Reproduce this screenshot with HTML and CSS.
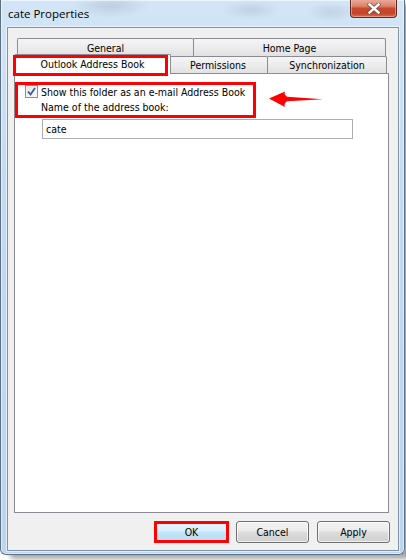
FILE: index.html
```html
<!DOCTYPE html>
<html lang="en">
<head>
<meta charset="utf-8">
<title>cate Properties</title>
<link rel="stylesheet" href="styles.css">
</head>
<body>
<div class="window">
  <div class="titlebar">
    <span class="title">cate Properties</span>
    <button class="close-btn" aria-label="Close">
      <svg width="14" height="11" viewBox="0 0 14 11">
        <path d="M2.5 1.5 L11.5 9.5 M11.5 1.5 L2.5 9.5" stroke="#5b4a48" stroke-width="4.2" stroke-linecap="square" fill="none" opacity="0.75"/>
        <path d="M2.5 1.5 L11.5 9.5 M11.5 1.5 L2.5 9.5" stroke="#ffffff" stroke-width="2.4" stroke-linecap="square" fill="none"/>
      </svg>
    </button>
  </div>
  <div class="client">
    <div class="tabs">
      <div class="tab-row back">
        <div class="tab tab-general">General</div>
        <div class="tab tab-home">Home Page</div>
      </div>
      <div class="tab-row front">
        <div class="tab tab-oab selected marked">Outlook Address Book</div>
        <div class="tab tab-perm">Permissions</div>
        <div class="tab tab-sync">Synchronization</div>
      </div>
    </div>
    <div class="panel">
      <div class="highlight-box">
        <label class="check-row">
          <span class="checkbox">
            <svg width="9" height="9" viewBox="0 0 9 9">
              <path d="M1 4.5 L3.5 7.5 L8 1" stroke="#3d5a98" stroke-width="1.8" fill="none"/>
            </svg>
          </span>
          <span>Show this folder as an e-mail Address Book</span>
        </label>
        <div class="field-label">Name of the address book:</div>
      </div>
      <div class="text-field">cate</div>
      <svg class="arrow" width="56" height="18" viewBox="0 0 56 18">
        <path d="M1 8.5 L17 1.5 Q15.5 4.5 19 6.8 L55 9.3 L19 11.2 Q15.5 13.5 17 17 Z" fill="#ff0000"/>
      </svg>
    </div>
    <div class="buttons">
      <button class="btn default marked">OK</button>
      <button class="btn">Cancel</button>
      <button class="btn">Apply</button>
    </div>
  </div>
</div>
</body>
</html>
```

FILE: styles.css
```css
* {
  box-sizing: border-box;
}

html,
body {
  margin: 0;
  padding: 0;
  background: #ffffff;
}

body {
  width: 406px;
  height: 560px;
  overflow: hidden;
  font-family: "DejaVu Sans Condensed", "Liberation Sans", sans-serif;
  font-size: 10.5px;
  color: #000000;
}

/* Aero window frame */
.window {
  width: 405px;
  height: 555px;
  display: flex;
  flex-direction: column;
  padding: 0 5px 3px 6px;
  border: 1px solid #5d6f85;
  border-top: 0;
  border-radius: 0 0 6px 6px;
  background:
    radial-gradient(ellipse 40px 12px at 110px 6px, rgba(150, 165, 185, 0.35), transparent),
    radial-gradient(ellipse 30px 10px at 250px 10px, rgba(150, 165, 185, 0.3), transparent),
    radial-gradient(ellipse 25px 10px at 330px 12px, rgba(160, 170, 190, 0.3), transparent),
    linear-gradient(180deg, #d3e5f7 0%, #c2d9f1 40%, #bcd5ef 100%);
  box-shadow: inset 0 0 0 1px rgba(255, 255, 255, 0.55), 9px 4px 5px rgba(0, 0, 0, 0.35);
}

.titlebar {
  flex: none;
  height: 27px;
  display: flex;
  align-items: flex-start;
  margin: 0 -5px 0 -6px;
  padding: 0 7px;
}

.title {
  padding-top: 6px;
  line-height: 16px;
  font-family: "Open Sans", "Noto Sans", sans-serif;
  font-size: 11.5px;
  color: #000000;
}

.close-btn {
  margin: -1px 0 0 auto;
  width: 47px;
  height: 19px;
  padding: 0;
  display: flex;
  align-items: center;
  justify-content: center;
  border: 1px solid #5c2b24;
  border-top: 0;
  border-radius: 0 0 4px 4px;
  background: linear-gradient(180deg, #eab0a2 0%, #dc8169 40%, #c94a2f 52%, #c5442a 80%, #d66f52 100%);
  box-shadow: inset 0 0 0 1px rgba(255, 210, 200, 0.45);
}

/* Client area of the dialog */
.client {
  flex: 1;
  display: flex;
  flex-direction: column;
  border: 1px solid #7f92a8;
  background: #f0f0f0;
  padding: 10px 8px 7px 6px;
  box-shadow: 0 0 0 1px rgba(255, 255, 255, 0.55);
}

/* Two-row tab strip */
.tabs {
  flex: none;
  height: 35px;
  margin-right: 1px;
}

.tab-row {
  display: flex;
}

.tab-row.back {
  height: 18px;
  padding-left: 3px;
}

.tab-row.front {
  height: 17px;
  padding-left: 2px;
}

.tab {
  height: 100%;
  display: flex;
  align-items: center;
  justify-content: center;
  white-space: nowrap;
  border: 1px solid #898c95;
  border-bottom: 0;
  border-radius: 2px 2px 0 0;
  background: linear-gradient(180deg, #f5f5f5 0%, #ececec 50%, #e1e1e1 100%);
}

.tab + .tab {
  margin-left: -1px;
}

.tab-general { width: 177px; }
.tab-home { width: 193px; }
.tab-oab { width: 157px; }
.tab-perm { width: 100px; }
.tab-sync { width: 120px; }

.tab.selected {
  position: relative;
  z-index: 3;
  height: 20px;
  margin: -2px -2px 0 -2px;
  padding-bottom: 1px;
  background: #ffffff;
}

.tab.selected + .tab {
  margin-left: -1px;
}

.tab.marked::after {
  content: "";
  position: absolute;
  left: -2px;
  right: 2px;
  top: 0;
  bottom: -2px;
  border: 3px solid #ff0000;
}

/* Tab page */
.panel {
  flex: 1;
  position: relative;
  z-index: 1;
  margin-right: 1px;
  padding-top: 8px;
  border: 1px solid #898c95;
  background: #ffffff;
}

.highlight-box {
  width: 241px;
  border: 3px solid #ff0000;
}

.check-row {
  height: 13px;
  display: flex;
  align-items: center;
  padding-left: 7px;
}

.checkbox {
  flex: none;
  width: 13px;
  height: 13px;
  margin-right: 3px;
  display: flex;
  align-items: center;
  justify-content: center;
  border: 1px solid #8f8f8f;
  background: linear-gradient(135deg, #e6e6e6 0%, #f8f8f8 100%);
  box-shadow: inset 0 0 0 1px #f4f4f4;
}

.field-label {
  height: 15px;
  margin-top: 2px;
  padding-left: 23px;
  line-height: 15px;
}

.text-field {
  width: 311px;
  height: 20px;
  margin: 1px 0 0 27px;
  padding-left: 3px;
  line-height: 18px;
  border: 1px solid #abadb3;
  background: #ffffff;
}

.arrow {
  position: absolute;
  left: 253px;
  top: 16px;
}

/* Dialog buttons */
.buttons {
  flex: none;
  height: 22px;
  margin-top: 8px;
  display: flex;
  justify-content: flex-end;
  gap: 8px;
}

.btn {
  position: relative;
  width: 73px;
  height: 22px;
  padding: 0;
  font: inherit;
  color: #000000;
  border: 1px solid #707070;
  border-radius: 3px;
  background: linear-gradient(180deg, #f2f2f2 0%, #ebebeb 45%, #dddddd 50%, #cfcfcf 100%);
  box-shadow: inset 0 0 0 1px rgba(255, 255, 255, 0.7);
}

.btn.default {
  border-color: #3c7fb1;
  background: linear-gradient(180deg, #eaf6fd 0%, #d9f0fc 45%, #c4e5f8 50%, #b5dbf3 100%);
}

.btn.marked::after {
  content: "";
  position: absolute;
  top: -1px;
  bottom: -1px;
  left: -2px;
  right: -2px;
  border: 3px solid #ff0000;
}
```
